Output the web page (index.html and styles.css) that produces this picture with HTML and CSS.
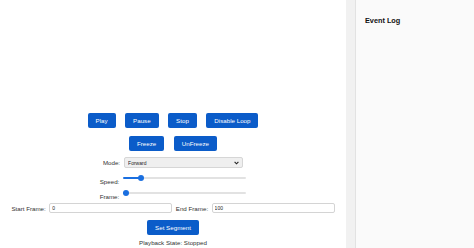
FILE: index.html
```html
<!DOCTYPE html>
<html>
<head>
    <title>Player Controls</title>
    <link rel="stylesheet" href="styles.css">
</head>
<body>
    <div class="layout">
        <div class="main">
            <div class="player"></div>

            <div class="btn-row">
                <button class="btn">Play</button>
                <button class="btn">Pause</button>
                <button class="btn">Stop</button>
                <button class="btn">Disable Loop</button>
            </div>
            <div class="btn-row">
                <button class="btn">Freeze</button>
                <button class="btn">UnFreeze</button>
            </div>

            <div class="mode-row">
                <label for="mode">Mode:</label>
                <div class="select-wrap">
                    <select id="mode">
                        <option>Forward</option>
                        <option>Reverse</option>
                        <option>Bounce</option>
                    </select>
                    <svg class="chevron" width="5" height="4" viewBox="0 0 5 4">
                        <path d="M0.6 0.8 L2.5 2.8 L4.4 0.8" fill="none" stroke="#222" stroke-width="1.1"/>
                    </svg>
                </div>
            </div>

            <div class="slider-row">
                <label for="speed">Speed:</label>
                <input type="range" id="speed" min="0" max="8" step="0.1" value="1" style="--fill: 13%">
            </div>
            <div class="slider-row">
                <label for="frame">Frame:</label>
                <input type="range" id="frame" min="0" max="100" value="0" style="--fill: 2%">
            </div>

            <div class="segment-row">
                <label for="startFrame">Start Frame:</label>
                <input type="text" id="startFrame" value="0">
                <label for="endFrame">End Frame:</label>
                <input type="text" id="endFrame" value="100">
            </div>

            <button class="btn segment-btn">Set Segment</button>
            <div class="state">Playback State: <span id="state">Stopped</span></div>
        </div>

        <div class="divider"></div>

        <div class="sidebar">
            <h3>Event Log</h3>
            <div id="log"></div>
        </div>
    </div>
</body>
</html>
```

FILE: styles.css
```css
body {
    margin: 0;
    font-family: "Liberation Sans", Arial, sans-serif;
    font-size: 6.2px;
    color: #333;
    background: #fff;
}
.layout {
    display: flex;
    height: 248px;
}
.main {
    width: 346px;
    display: flex;
    flex-direction: column;
    align-items: center;
}
.player {
    height: 105px;
}
.btn-row {
    display: flex;
    gap: 9.5px;
    margin-top: 8px;
}
.btn {
    font-family: inherit;
    font-size: 6.2px;
    line-height: 7px;
    padding: 4px 8px;
    background-color: #0b5cc9;
    color: #fff;
    border: none;
    border-radius: 2px;
    cursor: pointer;
}
.btn:hover {
    background-color: #0a50b0;
}
.mode-row {
    display: flex;
    align-items: center;
    gap: 4px;
    margin-top: 6px;
}
.select-wrap {
    position: relative;
}
select {
    -webkit-appearance: none;
    appearance: none;
    width: 119px;
    height: 11px;
    padding: 0 3px;
    font-family: inherit;
    font-size: 5px;
    color: #222;
    background: #efefef;
    border: 1px solid #d6d6d6;
    border-radius: 2px;
    display: block;
}
.chevron {
    position: absolute;
    right: 4px;
    top: 4px;
}
.slider-row {
    display: flex;
    align-items: flex-end;
    gap: 4px;
    height: 15px;
}
.slider-row:first-of-type {
    margin-top: 2px;
}
.mode-row + .slider-row {
    margin-top: 2px;
}
.slider-row label {
    line-height: 7px;
}
input[type=range] {
    -webkit-appearance: none;
    appearance: none;
    width: 123px;
    height: 8px;
    margin: 0 0 3px 0;
    background: transparent;
}
input[type=range]::-webkit-slider-runnable-track {
    height: 2px;
    border-radius: 1px;
    background: linear-gradient(to right, #1a6fe0 var(--fill), #e2e2e2 var(--fill));
}
input[type=range]::-webkit-slider-thumb {
    -webkit-appearance: none;
    width: 6px;
    height: 6px;
    margin-top: -2px;
    border-radius: 50%;
    background: #1a6fe0;
}
.segment-row {
    display: flex;
    align-items: center;
    gap: 3.5px;
    margin-top: 3px;
}
.segment-row input {
    box-sizing: border-box;
    width: 123px;
    height: 10px;
    padding: 0 2px;
    font-family: inherit;
    font-size: 5px;
    color: #222;
    border: 1px solid #d4d4d4;
    border-radius: 2px;
}
.segment-btn {
    margin-top: 7px;
}
.state {
    margin-top: 3.5px;
    line-height: 7px;
}
.divider {
    width: 9px;
    background: #f1f1f1;
    border-right: 1px solid #e2e2e2;
}
.sidebar {
    flex: 1;
    background: #fafafa;
    padding: 16px 9px 0;
}
.sidebar h3 {
    margin: 0;
    font-size: 7.3px;
    line-height: 9px;
    color: #111;
}
```
